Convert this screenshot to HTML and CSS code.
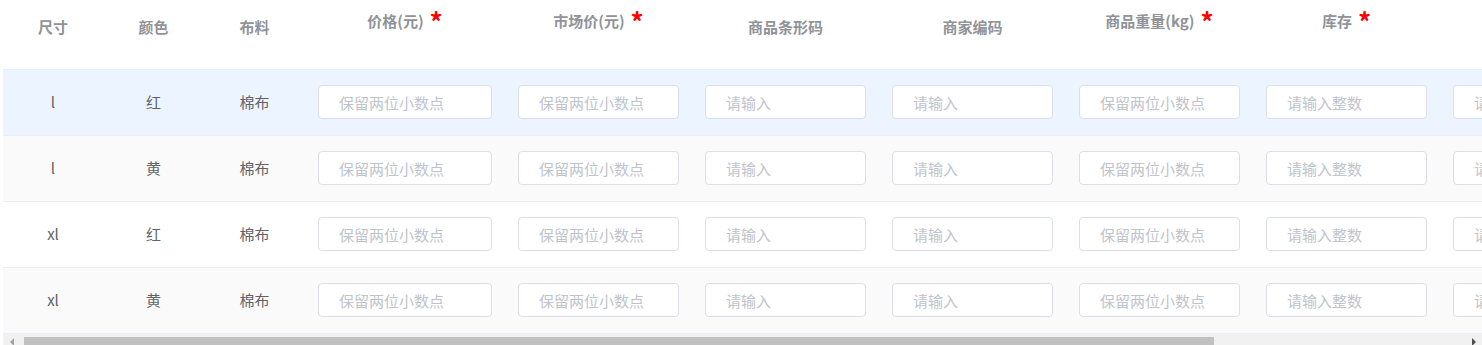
FILE: index.html
```html
<!DOCTYPE html>
<html lang="zh-CN">
<head>
    <meta charset="UTF-8">
    <meta name="viewport" content="width=device-width, initial-scale=1.0">
    <title>商品规格</title>
    <link rel="stylesheet" href="styles.css">
</head>
<body>
    <div class="sku-table">
        <div class="table-body">
            <table>
                <colgroup>
                    <col class="col-attr-first">
                    <col class="col-attr">
                    <col class="col-attr">
                    <col class="col-price">
                    <col class="col-field">
                    <col class="col-field">
                    <col class="col-field">
                    <col class="col-field">
                    <col class="col-field">
                    <col class="col-field">
                    <col class="col-field">
                </colgroup>
                <thead>
                    <tr class="head-row">
                        <th>尺寸</th>
                        <th>颜色</th>
                        <th>布料</th>
                        <th class="req">价格(元)<span class="star">*</span></th>
                        <th class="req">市场价(元)<span class="star">*</span></th>
                        <th>商品条形码</th>
                        <th>商家编码</th>
                        <th class="req">商品重量(kg)<span class="star">*</span></th>
                        <th class="req">库存<span class="star">*</span></th>
                        <th></th>
                        <th></th>
                    </tr>
                </thead>
                <tbody>
                    <!-- row under the mouse -->
                    <tr class="hover">
                        <td>l</td>
                        <td>红</td>
                        <td>棉布</td>
                        <td><input type="text" placeholder="保留两位小数点"></td>
                        <td><input type="text" placeholder="保留两位小数点"></td>
                        <td><input type="text" placeholder="请输入"></td>
                        <td><input type="text" placeholder="请输入"></td>
                        <td><input type="text" placeholder="保留两位小数点"></td>
                        <td><input type="text" placeholder="请输入整数"></td>
                        <td><input type="text" placeholder="请输入"></td>
                        <td></td>
                    </tr>
                    <tr class="striped">
                        <td>l</td>
                        <td>黄</td>
                        <td>棉布</td>
                        <td><input type="text" placeholder="保留两位小数点"></td>
                        <td><input type="text" placeholder="保留两位小数点"></td>
                        <td><input type="text" placeholder="请输入"></td>
                        <td><input type="text" placeholder="请输入"></td>
                        <td><input type="text" placeholder="保留两位小数点"></td>
                        <td><input type="text" placeholder="请输入整数"></td>
                        <td><input type="text" placeholder="请输入"></td>
                        <td></td>
                    </tr>
                    <tr>
                        <td>xl</td>
                        <td>红</td>
                        <td>棉布</td>
                        <td><input type="text" placeholder="保留两位小数点"></td>
                        <td><input type="text" placeholder="保留两位小数点"></td>
                        <td><input type="text" placeholder="请输入"></td>
                        <td><input type="text" placeholder="请输入"></td>
                        <td><input type="text" placeholder="保留两位小数点"></td>
                        <td><input type="text" placeholder="请输入整数"></td>
                        <td><input type="text" placeholder="请输入"></td>
                        <td></td>
                    </tr>
                    <tr class="striped">
                        <td>xl</td>
                        <td>黄</td>
                        <td>棉布</td>
                        <td><input type="text" placeholder="保留两位小数点"></td>
                        <td><input type="text" placeholder="保留两位小数点"></td>
                        <td><input type="text" placeholder="请输入"></td>
                        <td><input type="text" placeholder="请输入"></td>
                        <td><input type="text" placeholder="保留两位小数点"></td>
                        <td><input type="text" placeholder="请输入整数"></td>
                        <td><input type="text" placeholder="请输入"></td>
                        <td></td>
                    </tr>
                </tbody>
            </table>
        </div>

        <!-- horizontal scrollbar -->
        <div class="scrollbar">
            <div class="sb-btn">
                <svg width="6" height="8" viewBox="0 0 6 8"><path d="M5 0 L1 4 L5 8 Z" fill="#a3a3a3"/></svg>
            </div>
            <div class="sb-track">
                <div class="sb-thumb"></div>
            </div>
            <div class="sb-btn">
                <svg width="6" height="8" viewBox="0 0 6 8"><path d="M1 0 L5 4 L1 8 Z" fill="#505050"/></svg>
            </div>
        </div>
    </div>
</body>
</html>
```

FILE: styles.css
```css
body {
    margin: 0;
    font-family: "Noto Sans CJK SC", "Microsoft YaHei", sans-serif;
    font-size: 15px;
    color: #606266;
    background-color: #fff;
    overflow: hidden;
}
.sku-table {
    margin-left: 3px;
}
.table-body {
    overflow: hidden;
}
table {
    border-collapse: collapse;
    table-layout: fixed;
    width: 1795px;
}
.col-attr-first {
    width: 100px;
}
.col-attr {
    width: 101px;
}
.col-price {
    width: 200px;
}
.col-field {
    width: 187px;
}
.head-row {
    height: 69px;
}
th {
    padding: 16px 0 0;
    vertical-align: top;
    text-align: center;
    color: #909399;
    font-weight: bold;
    line-height: 22px;
    border-bottom: 1px solid #ebeef5;
    white-space: nowrap;
}
th.req {
    padding-top: 10px;
}
.star {
    margin-left: 6px;
    color: #f00;
    font-size: 26px;
    line-height: 22px;
    vertical-align: top;
}
tbody tr {
    height: 66px;
}
td {
    padding: 0 13px;
    text-align: center;
    line-height: 22px;
    border-bottom: 1px solid #ebeef5;
}
tr.striped td {
    background-color: #fafafa;
}
tr.hover td {
    background-color: #ecf5ff;
}
td input {
    display: block;
    width: 100%;
    height: 34px;
    box-sizing: border-box;
    padding: 0 20px;
    border: 1px solid #dcdfe6;
    border-radius: 4px;
    background-color: #fff;
    font: inherit;
    color: #606266;
    outline: none;
}
td input::placeholder {
    color: #c0c4cc;
}
.scrollbar {
    display: flex;
    height: 17px;
    background-color: #f1f1f1;
}
.sb-btn {
    width: 17px;
    display: flex;
    align-items: center;
    justify-content: center;
}
.sb-track {
    flex: 1;
    padding: 3px 0 3px 4px;
}
.sb-thumb {
    width: 1190px;
    height: 11px;
    background-color: #c1c1c1;
}
```
